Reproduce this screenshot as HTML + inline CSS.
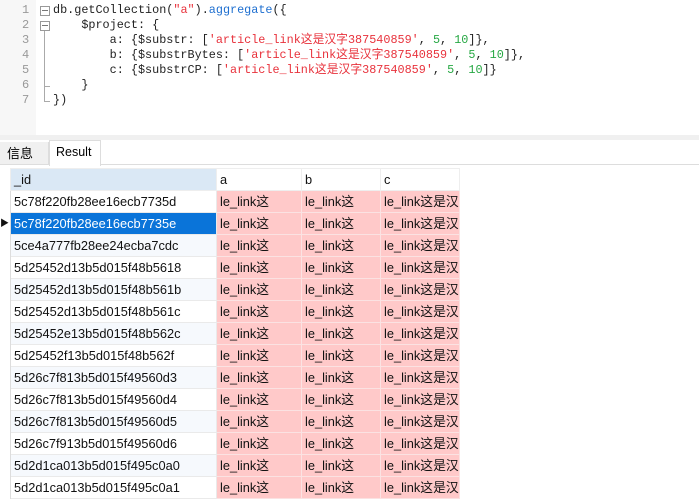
<!DOCTYPE html><html><head><style>
body{margin:0;width:699px;height:503px;background:#fff;position:relative;overflow:hidden;font-family:"Liberation Sans","Noto Sans CJK SC",sans-serif;}
.ed{position:absolute;left:0;top:0;width:699px;height:135px;background:#fff}
.gut{position:absolute;left:0;top:0;width:36px;height:135px;background:#f7f7f7}
.ln{position:absolute;left:22px;font:12px/15px "Liberation Mono",monospace;color:#999}
.cd{position:absolute;left:53px;font-family:"Liberation Mono","Noto Sans CJK SC",monospace;font-size:11.8px;line-height:15px;height:15px;color:#222;white-space:pre}
.s{color:#e8323c}.n{color:#27a844}.f{color:#1e6fd0}
.box{position:absolute;left:40px;width:8px;height:8px;border:1px solid #999;background:#fff}
.box:after{content:"";position:absolute;left:1px;top:3px;width:6px;height:1px;background:#777}
.strip{position:absolute;left:0;top:135px;width:699px;height:5px;background:#f0f0f0}
.tabs{position:absolute;left:0;top:140px;width:699px;height:24px;background:#fff;border-bottom:1px solid #ddd}
.t1{position:absolute;left:0;top:2px;width:48px;height:22px;background:#f0f0f0;border-right:1px solid #ddd;font-size:13px;line-height:24px;text-indent:7px}
.t2{position:absolute;left:49px;top:0;width:50px;height:25px;background:#fff;border:1px solid #ddd;border-bottom:none;font-size:12.5px;line-height:22px;text-indent:6px}
table{position:absolute;left:0;top:168px;border-collapse:collapse;font-size:12.8px;color:#111}
td{height:21px;padding:0 0 0 3px;border:1px solid #eaeaea;white-space:nowrap;overflow:hidden;line-height:21px}
td.i{width:10px;padding:0;border:none;border-right:1px solid #ddd;background:#fff;font-size:9px}
td.id{width:202px}
td.p{background:#ffc9c9;border-color:#fbe2e2}
tr.h td{background:#fff;border-color:#eee}
tr.h td.id{background:#dae8f5}
tr.alt td.id{background:#f6f9fd}
tr.sel td.id{background:#0a74d9;color:#fff}
</style></head><body>
<div class="ed"><div class="gut"></div>
<div class="ln" style="top:3px">1</div><div class="ln" style="top:18px">2</div><div class="ln" style="top:33px">3</div><div class="ln" style="top:48px">4</div><div class="ln" style="top:63px">5</div><div class="ln" style="top:78px">6</div><div class="ln" style="top:93px">7</div>
<div class="box" style="top:6px"></div><div class="box" style="top:21px"></div>
<div style="position:absolute;left:44px;top:31px;width:1px;height:70px;background:#aaa"></div>
<div style="position:absolute;left:44px;top:86px;width:6px;height:1px;background:#aaa"></div>
<div style="position:absolute;left:44px;top:101px;width:6px;height:1px;background:#aaa"></div>
<div class="cd" style="top:3px">db.getCollection(<span class="s">"a"</span>).<span class="f">aggregate</span>({</div>
<div class="cd" style="top:18px">    $project: {</div>
<div class="cd" style="top:33px">        a: {$substr: [<span class="s">'article_link这是汉字387540859'</span>, <span class="n">5</span>, <span class="n">10</span>]},</div>
<div class="cd" style="top:48px">        b: {$substrBytes: [<span class="s">'article_link这是汉字387540859'</span>, <span class="n">5</span>, <span class="n">10</span>]},</div>
<div class="cd" style="top:63px">        c: {$substrCP: [<span class="s">'article_link这是汉字387540859'</span>, <span class="n">5</span>, <span class="n">10</span>]}</div>
<div class="cd" style="top:78px">    }</div>
<div class="cd" style="top:93px">})</div>
</div>
<div class="strip"></div>
<div class="tabs"><div class="t1">信息</div><div class="t2">Result</div></div>
<table>
<tr class="h"><td class="i"></td><td class="id">_id</td><td style="width:81px">a</td><td style="width:75px">b</td><td style="width:75px">c</td></tr>
<tr><td class="i"></td><td class="id">5c78f220fb28ee16ecb7735d</td><td class="p">le_link这</td><td class="p">le_link这</td><td class="p">le_link这是汉</td></tr>
<tr class="sel"><td class="i">▶</td><td class="id">5c78f220fb28ee16ecb7735e</td><td class="p">le_link这</td><td class="p">le_link这</td><td class="p">le_link这是汉</td></tr>
<tr class="alt"><td class="i"></td><td class="id">5ce4a777fb28ee24ecba7cdc</td><td class="p">le_link这</td><td class="p">le_link这</td><td class="p">le_link这是汉</td></tr>
<tr><td class="i"></td><td class="id">5d25452d13b5d015f48b5618</td><td class="p">le_link这</td><td class="p">le_link这</td><td class="p">le_link这是汉</td></tr>
<tr class="alt"><td class="i"></td><td class="id">5d25452d13b5d015f48b561b</td><td class="p">le_link这</td><td class="p">le_link这</td><td class="p">le_link这是汉</td></tr>
<tr><td class="i"></td><td class="id">5d25452d13b5d015f48b561c</td><td class="p">le_link这</td><td class="p">le_link这</td><td class="p">le_link这是汉</td></tr>
<tr class="alt"><td class="i"></td><td class="id">5d25452e13b5d015f48b562c</td><td class="p">le_link这</td><td class="p">le_link这</td><td class="p">le_link这是汉</td></tr>
<tr><td class="i"></td><td class="id">5d25452f13b5d015f48b562f</td><td class="p">le_link这</td><td class="p">le_link这</td><td class="p">le_link这是汉</td></tr>
<tr class="alt"><td class="i"></td><td class="id">5d26c7f813b5d015f49560d3</td><td class="p">le_link这</td><td class="p">le_link这</td><td class="p">le_link这是汉</td></tr>
<tr><td class="i"></td><td class="id">5d26c7f813b5d015f49560d4</td><td class="p">le_link这</td><td class="p">le_link这</td><td class="p">le_link这是汉</td></tr>
<tr class="alt"><td class="i"></td><td class="id">5d26c7f813b5d015f49560d5</td><td class="p">le_link这</td><td class="p">le_link这</td><td class="p">le_link这是汉</td></tr>
<tr><td class="i"></td><td class="id">5d26c7f913b5d015f49560d6</td><td class="p">le_link这</td><td class="p">le_link这</td><td class="p">le_link这是汉</td></tr>
<tr class="alt"><td class="i"></td><td class="id">5d2d1ca013b5d015f495c0a0</td><td class="p">le_link这</td><td class="p">le_link这</td><td class="p">le_link这是汉</td></tr>
<tr><td class="i"></td><td class="id">5d2d1ca013b5d015f495c0a1</td><td class="p">le_link这</td><td class="p">le_link这</td><td class="p">le_link这是汉</td></tr>
</table>
</body></html>
